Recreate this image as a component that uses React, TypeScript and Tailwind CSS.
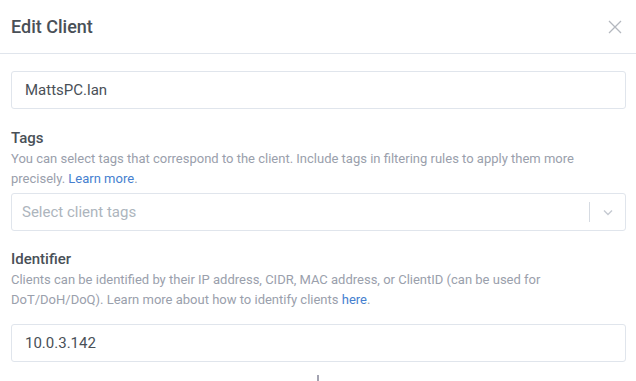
import React from 'react';

const FONT = { fontFamily: 'Roboto, "Open Sans", sans-serif' };

function Field({ value }: { value: string }) {
  return (
    <div className="h-[38px] w-full rounded-[3px] border border-[#e0e5ec] bg-white px-[13px] flex items-center text-[15px] text-[#495057]">
      {value}
    </div>
  );
}

export default function App() {
  return (
    <div className="w-[636px] h-[381px] overflow-hidden bg-white" style={FONT}>
      <div className="h-[54px] border-b border-[#e0e5ec] flex items-center justify-between pl-[11px] pr-[14px]">
        <h2 className="text-[18px] font-medium text-[#495057]">Edit Client</h2>
        <svg width="14" height="14" viewBox="0 0 14 14" className="text-[#b4b8bf]">
          <path d="M1 1L13 13M13 1L1 13" stroke="currentColor" strokeWidth="1.3" fill="none" />
        </svg>
      </div>

      <div className="pl-[11px] pr-[10px] pt-[17px] flex flex-col">
        <Field value="MattsPC.lan" />

        <div className="mt-[18px] text-[15px] font-medium text-[#495057] leading-[22px]">Tags</div>
        <p className="w-[590px] text-[13px] leading-[20px] text-[#9aa0ac]">
          You can select tags that correspond to the client. Include tags in filtering rules to apply them more precisely.{' '}
          <span className="text-[#467fcf]">Learn more</span>.
        </p>

        <div className="mt-[4px] h-[38px] rounded-[3px] border border-[#e0e5ec] flex items-center">
          <span className="flex-1 pl-[10px] text-[15px] text-[#adb5bd]">Select client tags</span>
          <span className="w-px h-[20px] bg-[#d6dbe2]" />
          <span className="w-[35px] flex justify-center">
            <svg width="10" height="7" viewBox="0 0 10 7">
              <path d="M1 1.5L5 5.5L9 1.5" stroke="#c5cad2" strokeWidth="1.4" fill="none" />
            </svg>
          </span>
        </div>

        <div className="mt-[17px] text-[15px] font-medium text-[#495057] leading-[22px]">Identifier</div>
        <p className="w-[580px] text-[13px] leading-[20px] text-[#9aa0ac]">
          Clients can be identified by their IP address, CIDR, MAC address, or ClientID (can be used for DoT/DoH/DoQ). Learn more about how to identify clients{' '}
          <span className="text-[#467fcf]">here</span>.
        </p>

        <div className="mt-[14px]">
          <Field value="10.0.3.142" />
        </div>

        <div className="mt-[13px] flex justify-center pr-[2px]">
          <span className="w-[2px] h-[10px] bg-[#a3a3b1]" />
        </div>
      </div>
    </div>
  );
}
